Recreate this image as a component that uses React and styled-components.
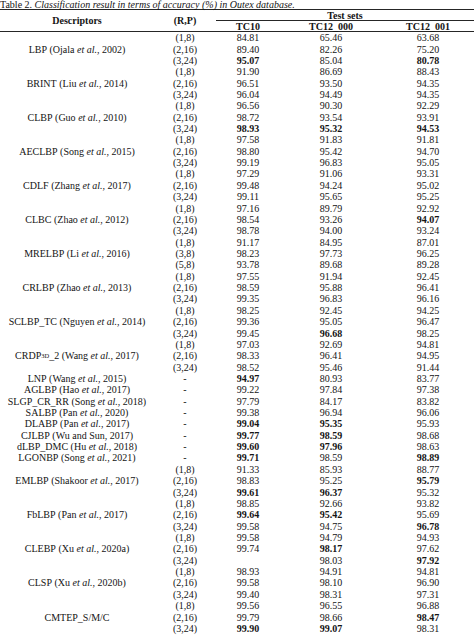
import React from "react";
import styled, { createGlobalStyle } from "styled-components";

const GlobalStyle = createGlobalStyle`
  html, body { margin: 0; padding: 0; background: #fff; }
  body {
    font-family: "Liberation Serif", "Times New Roman", serif;
    color: #141414;
  }
`;

const Page = styled.div`
  width: 474px;
  height: 635px;
  overflow: hidden;
  background: #fff;
`;

const Caption = styled.div`
  font-size: 10px;
  line-height: 9px;
  height: 9px;
  white-space: nowrap;
`;

const CaptionBody = styled.em`
  font-style: italic;
`;

const Grid = styled.div`
  display: grid;
  grid-template-columns: 154px 62px 64px 102px 92px;
  grid-auto-rows: ${(p) => p.$row}px;
  font-size: 10px;
  border-top: ${(p) => (p.$ruleTop ? "1px solid #262626" : "none")};
`;

const Head = styled.div`
  font-weight: bold;
  display: flex;
  align-items: center;
  justify-content: center;
  white-space: nowrap;
  grid-row: span ${(p) => p.$rows || 1};
  grid-column: span ${(p) => p.$cols || 1};
  border-bottom: 1px solid #262626;
`;

const Cell = styled.div`
  display: flex;
  align-items: center;
  justify-content: center;
  white-space: nowrap;
  font-weight: ${(p) => (p.$bold ? "bold" : "normal")};
`;

const NameCell = styled(Cell)`
  grid-row: span ${(p) => p.$rows};
`;

const Sub = styled.sub`
  font-size: 6.5px;
  line-height: 0;
  vertical-align: -1px;
`;

const Em = styled.i`
  font-style: italic;
`;

const cite = (name, author, year, etal = true) => (
  <>
    {name}&nbsp;({author}
    {etal ? (
      <>
        &nbsp;<Em>et al.</Em>
      </>
    ) : null}
    ,&nbsp;{year})
  </>
);

const groups = [
  {
    name: cite("LBP", "Ojala", 2002),
    rows: [
      ["(1,8)", "84.81", "65.46", "63.68"],
      ["(2,16)", "89.40", "82.26", "75.20"],
      ["(3,24)", "*95.07", "85.04", "*80.78"],
    ],
  },
  {
    name: cite("BRINT", "Liu", 2014),
    rows: [
      ["(1,8)", "91.90", "86.69", "88.43"],
      ["(2,16)", "96.51", "93.50", "94.35"],
      ["(3,24)", "96.04", "94.49", "94.35"],
    ],
  },
  {
    name: cite("CLBP", "Guo", 2010),
    rows: [
      ["(1,8)", "96.56", "90.30", "92.29"],
      ["(2,16)", "98.72", "93.54", "93.91"],
      ["(3,24)", "*98.93", "*95.32", "*94.53"],
    ],
  },
  {
    name: cite("AECLBP", "Song", 2015),
    rows: [
      ["(1,8)", "97.58", "91.83", "91.81"],
      ["(2,16)", "98.80", "95.42", "94.70"],
      ["(3,24)", "99.19", "96.83", "95.05"],
    ],
  },
  {
    name: cite("CDLF", "Zhang", 2017),
    rows: [
      ["(1,8)", "97.29", "91.06", "93.31"],
      ["(2,16)", "99.48", "94.24", "95.02"],
      ["(3,24)", "99.11", "95.65", "95.25"],
    ],
  },
  {
    name: cite("CLBC", "Zhao", 2012),
    rows: [
      ["(1,8)", "97.16", "89.79", "92.92"],
      ["(2,16)", "98.54", "93.26", "*94.07"],
      ["(3,24)", "98.78", "94.00", "93.24"],
    ],
  },
  {
    name: cite("MRELBP", "Li", 2016),
    rows: [
      ["(1,8)", "91.17", "84.95", "87.01"],
      ["(3,8)", "98.23", "97.73", "96.25"],
      ["(5,8)", "93.78", "89.68", "89.28"],
    ],
  },
  {
    name: cite("CRLBP", "Zhao", 2013),
    rows: [
      ["(1,8)", "97.55", "91.94", "92.45"],
      ["(2,16)", "98.59", "95.88", "96.41"],
      ["(3,24)", "99.35", "96.83", "96.16"],
    ],
  },
  {
    name: cite("SCLBP_TC", "Nguyen", 2014),
    rows: [
      ["(1,8)", "98.25", "92.45", "94.25"],
      ["(2,16)", "99.36", "95.05", "96.47"],
      ["(3,24)", "99.45", "*96.68", "98.25"],
    ],
  },
  {
    name: cite(
      <>
        CRDP<Sub>3D</Sub>_2
      </>,
      "Wang",
      2017
    ),
    rows: [
      ["(1,8)", "97.03", "92.69", "94.81"],
      ["(2,16)", "98.33", "96.41", "94.95"],
      ["(3,24)", "98.52", "95.46", "91.44"],
    ],
  },
  { name: cite("LNP", "Wang", 2015), rows: [["-", "*94.97", "80.93", "83.77"]] },
  { name: cite("AGLBP", "Hao", 2017), rows: [["-", "99.22", "97.84", "97.38"]] },
  { name: cite("SLGP_CR_RR", "Song", 2018), rows: [["-", "97.79", "84.17", "83.82"]] },
  { name: cite("SALBP", "Pan", 2020), rows: [["-", "99.38", "96.94", "96.06"]] },
  { name: cite("DLABP", "Pan", 2017), rows: [["-", "*99.04", "*95.35", "95.93"]] },
  { name: cite("CJLBP", "Wu and Sun", 2017, false), rows: [["-", "*99.77", "*98.59", "98.68"]] },
  { name: cite("dLBP_DMC", "Hu", 2018), rows: [["-", "*99.60", "*97.96", "98.63"]] },
  { name: cite("LGONBP", "Song", 2021), rows: [["-", "*99.71", "98.59", "*98.89"]] },
  {
    name: cite("EMLBP", "Shakoor", 2017),
    rows: [
      ["(1,8)", "91.33", "85.93", "88.77"],
      ["(2,16)", "98.83", "95.25", "*95.79"],
      ["(3,24)", "*99.61", "*96.37", "95.32"],
    ],
  },
  {
    name: cite("FbLBP", "Pan", 2017),
    rows: [
      ["(1,8)", "98.85", "92.66", "93.82"],
      ["(2,16)", "*99.64", "*95.42", "95.69"],
      ["(3,24)", "99.58", "94.75", "*96.78"],
    ],
  },
  {
    name: cite("CLEBP", "Xu", "2020a"),
    rows: [
      ["(1,8)", "99.58", "94.79", "94.93"],
      ["(2,16)", "99.74", "*98.17", "97.62"],
      ["(3,24)", "", "98.03", "*97.92"],
    ],
  },
  {
    name: cite("CLSP", "Xu", "2020b"),
    rows: [
      ["(1,8)", "98.93", "94.91", "94.81"],
      ["(2,16)", "99.58", "98.10", "96.90"],
      ["(3,24)", "99.40", "98.31", "97.31"],
    ],
  },
  {
    name: "CMTEP_S/M/C",
    rows: [
      ["(1,8)", "99.56", "96.55", "96.88"],
      ["(2,16)", "99.79", "98.66", "*98.47"],
      ["(3,24)", "*99.90", "*99.07", "98.31"],
    ],
  },
];

const Value = ({ v }) => {
  const bold = v.startsWith("*");
  return <Cell $bold={bold}>{bold ? v.slice(1) : v}</Cell>;
};

export default function App() {
  return (
    <Page>
      <GlobalStyle />
      <Caption>
        Table 2. <CaptionBody>Classification result in terms of accuracy (%) in Outex database.</CaptionBody>
      </Caption>
      <Grid $row={11} $ruleTop>
        <Head $rows={2}>Descriptors</Head>
        <Head $rows={2}>(R,P)</Head>
        <Head $cols={3}>Test sets</Head>
        <Head>TC10</Head>
        <Head>TC12_000</Head>
        <Head>TC12_001</Head>
      </Grid>
      <Grid $row={11.36}>
        {groups.map((g, gi) => (
          <React.Fragment key={gi}>
            {g.rows.map((r, ri) => (
              <React.Fragment key={ri}>
                {ri === 0 ? <NameCell $rows={g.rows.length}>{g.name}</NameCell> : null}
                <Cell>{r[0]}</Cell>
                <Value v={r[1]} />
                <Value v={r[2]} />
                <Value v={r[3]} />
              </React.Fragment>
            ))}
          </React.Fragment>
        ))}
      </Grid>
    </Page>
  );
}
